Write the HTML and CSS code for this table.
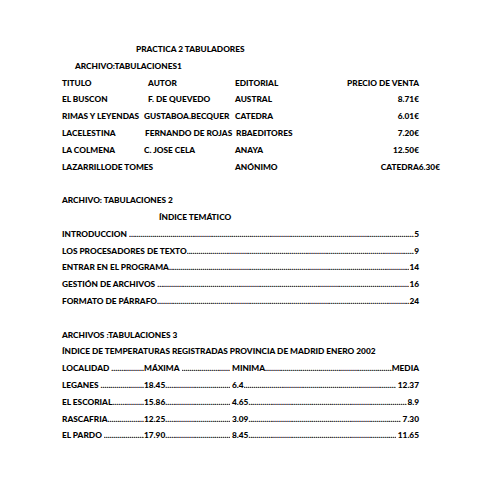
FILE: index.html
```html
<!DOCTYPE html>
<html lang="es">
<head>
<meta charset="utf-8">
<title>Practica 2 Tabuladores</title>
<link rel="stylesheet" href="styles.css">
</head>
<body>
<div class="page">
  <p class="line title">PRACTICA 2 TABULADORES</p>
  <p class="line file1">ARCHIVO:TABULACIONES1</p>

  <div class="books">
    <span>TITULO</span><span class="sr">AUTOR</span><span>EDITORIAL</span><span class="price">PRECIO DE VENTA</span>
    <span>EL BUSCON</span><span class="sr">F. DE QUEVEDO</span><span>AUSTRAL</span><span class="price">8.71€</span>
    <span>RIMAS Y LEYENDAS</span><span class="sl">GUSTABOA.BECQUER</span><span>CATEDRA</span><span class="price">6.01€</span>
    <span>LACELESTINA</span><span>FERNANDO DE ROJAS</span><span class="s1">RBAEDITORES</span><span class="price">7.20€</span>
    <span>LA COLMENA</span><span class="s0">C. JOSE CELA</span><span>ANAYA</span><span class="price">12.50€</span>
    <span class="wide">LAZARRILLODE TOMES</span><span>ANÓNIMO</span><span class="price over">CATEDRA6.30€</span>
  </div>

  <div class="blank"></div>

  <p class="line">ARCHIVO: TABULACIONES 2</p>
  <p class="line toc-title">ÍNDICE TEMÁTICO</p>
  <div class="toc">
    <div class="toc-row"><span class="sp">INTRODUCCION</span><span class="leader"></span><span>5</span></div>
    <div class="toc-row"><span>LOS PROCESADORES DE TEXTO</span><span class="leader"></span><span>9</span></div>
    <div class="toc-row"><span>ENTRAR EN EL PROGRAMA</span><span class="leader"></span><span>14</span></div>
    <div class="toc-row"><span class="sp">GESTIÓN DE ARCHIVOS</span><span class="leader"></span><span>16</span></div>
    <div class="toc-row"><span>FORMATO DE PÁRRAFO</span><span class="leader"></span><span>24</span></div>
  </div>

  <div class="blank"></div>

  <p class="line">ARCHIVOS :TABULACIONES 3</p>
  <p class="line">ÍNDICE DE TEMPERATURAS REGISTRADAS PROVINCIA DE MADRID ENERO 2002</p>
  <div class="temps">
    <div class="cell"><span class="sp">LOCALIDAD</span><span class="leader"></span></div>
    <div class="cell mid"><span class="sp">MÁXIMA</span><span class="leader"></span></div>
    <div class="cell"><span>MINIMA</span><span class="leader"></span><span>MEDIA</span></div>

    <div class="cell"><span class="sp">LEGANES</span><span class="leader"></span></div>
    <div class="cell mid"><span>18.45</span><span class="leader"></span></div>
    <div class="cell"><span>6.4</span><span class="leader"></span><span class="ps">12.37</span></div>

    <div class="cell"><span>EL ESCORIAL</span><span class="leader"></span></div>
    <div class="cell mid"><span>15.86</span><span class="leader"></span></div>
    <div class="cell"><span>4.65</span><span class="leader"></span><span>8.9</span></div>

    <div class="cell"><span>RASCAFRIA</span><span class="leader"></span></div>
    <div class="cell mid"><span>12.25</span><span class="leader"></span></div>
    <div class="cell"><span>3.09</span><span class="leader"></span><span class="ps">7.30</span></div>

    <div class="cell"><span class="sp">EL PARDO</span><span class="leader"></span></div>
    <div class="cell mid"><span>17.90</span><span class="leader"></span></div>
    <div class="cell"><span>8.45</span><span class="leader"></span><span class="ps">11.65</span></div>
  </div>
</div>
</body>
</html>
```

FILE: styles.css
```css
html, body {
  margin: 0;
  padding: 0;
  background: #ffffff;
}

body {
  font-family: Lato, "Liberation Sans", Arial, sans-serif;
  font-weight: 900;
  font-size: 8.3px;
  color: #000000;
}

.page {
  width: 357px;
  padding: 41px 0 0 62px;
  line-height: 16.8px;
}

.line {
  margin: 0;
  height: 16.8px;
  white-space: nowrap;
}

.title {
  padding-left: 74px;
}

.file1 {
  padding-left: 13px;
}

.toc-title {
  padding-left: 97px;
}

.blank {
  height: 16.8px;
}

/* books table */
.books {
  display: grid;
  grid-template-columns: 83px 90px 1fr 90px;
  grid-auto-rows: 16.8px;
  white-space: nowrap;
}

.books .wide {
  grid-column: span 2;
}

.books .price {
  text-align: right;
}

.books .over {
  margin-right: -21px;
}

.sr {
  margin-left: 3px;
}

.sl {
  margin-left: -1px;
}

.s0 {
  margin-left: -1px;
}

.s1 {
  margin-left: 1px;
}

/* table of contents */
.toc-row {
  display: flex;
  height: 16.8px;
  white-space: nowrap;
}

.leader {
  flex: 1 1 0;
  min-width: 0;
  overflow: hidden;
  white-space: nowrap;
}

.leader::before {
  content: "................................................................................................................................................................................................";
}

.sp {
  margin-right: 2px;
}

.ps {
  margin-left: 2px;
}

/* temperatures */
.temps {
  display: grid;
  grid-template-columns: 82px 88px 1fr;
  grid-auto-rows: 16.8px;
}

.temps .cell {
  display: flex;
  white-space: nowrap;
  min-width: 0;
}

.temps .mid {
  padding-right: 2px;
}
```
